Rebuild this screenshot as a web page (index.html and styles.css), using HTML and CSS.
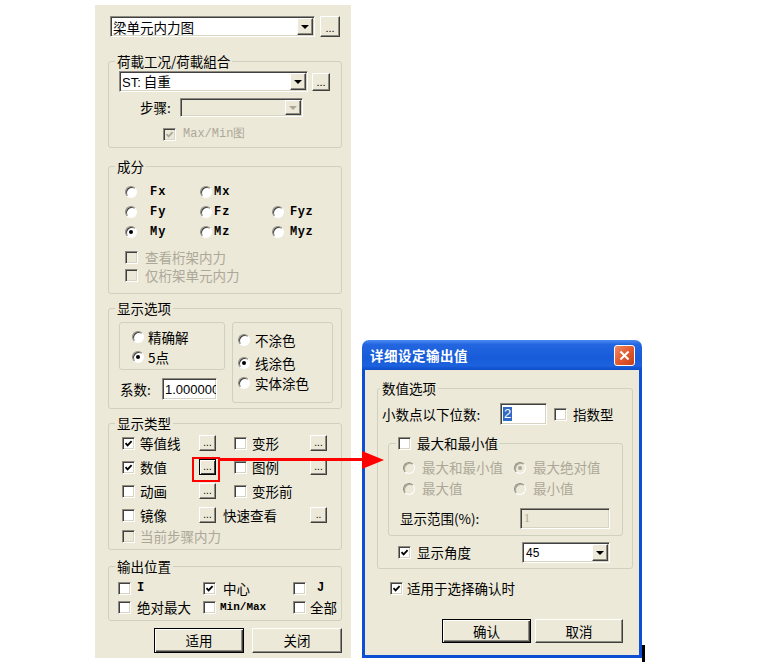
FILE: index.html
```html
<!DOCTYPE html>
<html>
<head>
<meta charset="utf-8">
<title>梁单元内力图</title>
<link rel="stylesheet" href="styles.css">
</head>
<body>
<div class="page">
  <div class="panel">
    <div class="toprow">
      <div class="combo c-main"><span class="ctext">梁单元内力图</span><span class="dd"><i></i></span></div>
      <span class="btn dots b-main">...</span>
    </div>

    <fieldset class="grp g1">
      <legend>荷載工况/荷載組合</legend>
      <div class="line l-st">
        <div class="combo c-st"><span class="ctext"><span class="lat">ST:</span> 自重</span><span class="dd"><i></i></span></div>
        <span class="btn dots b-st">...</span>
      </div>
      <div class="line l-step">
        <span class="step">步骤:</span>
        <div class="combo c-step dis"><span class="ctext"></span><span class="dd"><i></i></span></div>
      </div>
      <div class="line l-mm">
        <span class="cb dis"><svg viewBox="0 0 11 11"><path d="M2.5 5.2 L4.6 7.4 L8.6 3.2"/></svg></span>
        <span class="mono dtext mm-l">Max/Min图</span>
      </div>
    </fieldset>

    <fieldset class="grp g2">
      <legend>成分</legend>
      <div class="rgrid">
        <span class="opt"><span class="rb"></span><span class="mono lb1">Fx</span></span>
        <span class="opt"><span class="rb"></span><span class="mono lb2">Mx</span></span>
        <span class="opt"></span>
        <span class="opt"><span class="rb"></span><span class="mono lb1">Fy</span></span>
        <span class="opt"><span class="rb"></span><span class="mono lb2">Fz</span></span>
        <span class="opt"><span class="rb"></span><span class="mono lb3">Fyz</span></span>
        <span class="opt"><span class="rb on"></span><span class="mono lb1">My</span></span>
        <span class="opt"><span class="rb"></span><span class="mono lb2">Mz</span></span>
        <span class="opt"><span class="rb"></span><span class="mono lb3">Myz</span></span>
      </div>
      <div class="dchk first"><span class="cb dis"></span><span class="dtext">查看桁架内力</span></div>
      <div class="dchk"><span class="cb dis"></span><span class="dtext">仅桁架单元内力</span></div>
    </fieldset>

    <fieldset class="grp g3">
      <legend>显示选项</legend>
      <div class="g3-body">
        <div class="lcol">
          <div class="ibox ib1">
            <div class="ropt"><span class="rb"></span><span class="rl">精确解</span></div>
            <div class="ropt"><span class="rb on"></span><span class="rl">5点</span></div>
          </div>
          <div class="coef">
            <span class="coef-l">系数:</span>
            <span class="field f-coef">1.000000</span>
          </div>
        </div>
        <div class="ibox ib2">
          <div class="ropt"><span class="rb"></span><span class="rl">不涂色</span></div>
          <div class="ropt r2"><span class="rb on"></span><span class="rl">线涂色</span></div>
          <div class="ropt"><span class="rb"></span><span class="rl">实体涂色</span></div>
        </div>
      </div>
    </fieldset>

    <fieldset class="grp g4">
      <legend>显示类型</legend>
      <div class="trow">
        <span class="ti"><span class="cb"><svg viewBox="0 0 11 11"><path d="M2.5 5.2 L4.6 7.4 L8.6 3.2"/></svg></span><span>等值线</span></span>
        <span class="btn dots sm">...</span>
        <span class="ti t2"><span class="cb"></span><span>变形</span></span>
        <span class="btn dots sm">...</span>
      </div>
      <div class="trow">
        <span class="ti"><span class="cb"><svg viewBox="0 0 11 11"><path d="M2.5 5.2 L4.6 7.4 L8.6 3.2"/></svg></span><span>数值</span></span>
        <span class="btn dots sm pressed">...</span>
        <span class="ti t2"><span class="cb"></span><span>图例</span></span>
        <span class="btn dots sm">...</span>
      </div>
      <div class="trow">
        <span class="ti"><span class="cb"></span><span>动画</span></span>
        <span class="btn dots sm">...</span>
        <span class="ti t2"><span class="cb"></span><span>变形前</span></span>
      </div>
      <div class="trow">
        <span class="ti"><span class="cb"></span><span>镜像</span></span>
        <span class="btn dots sm">...</span>
        <span class="ti t3">快速查看</span>
        <span class="btn dots sm">..</span>
      </div>
      <div class="trow last">
        <span class="ti wide"><span class="cb dis"></span><span class="dtext">当前步骤内力</span></span>
      </div>
    </fieldset>

    <fieldset class="grp g5">
      <legend>输出位置</legend>
      <div class="orow">
        <span class="oi o1"><span class="cb"></span><span class="mono ol-i">I</span></span>
        <span class="oi o2"><span class="cb"><svg viewBox="0 0 11 11"><path d="M2.5 5.2 L4.6 7.4 L8.6 3.2"/></svg></span><span class="ol-c">中心</span></span>
        <span class="oi o3"><span class="cb"></span><span class="mono ol-j">J</span></span>
      </div>
      <div class="orow">
        <span class="oi o1"><span class="cb"></span><span class="ol-a">绝对最大</span></span>
        <span class="oi o2"><span class="cb"></span><span class="mono ol-m">Min/Max</span></span>
        <span class="oi o3"><span class="cb"></span><span class="ol-q">全部</span></span>
      </div>
    </fieldset>

    <div class="btnrow">
      <span class="btn pbtn def">适用</span>
      <span class="btn pbtn">关闭</span>
    </div>
  </div>

  <div class="dlg">
    <div class="title">
      <span class="ttext">详细设定输出值</span>
      <span class="close"><svg viewBox="0 0 21 21"><path d="M6 6 L15 15 M15 6 L6 15"/></svg></span>
    </div>
    <div class="dbody">
      <fieldset class="grp dg1">
        <legend>数值选项</legend>
        <div class="r-dec">
          <span class="dec-l">小数点以下位数:</span>
          <span class="field f-dec"><span class="sel">2</span></span>
          <span class="cb"></span>
          <span class="exp-l">指数型</span>
        </div>
        <fieldset class="grp dg2">
          <legend><span class="cb"></span><span>最大和最小值</span></legend>
          <div class="mgrid">
            <span class="opt"><span class="rb dis"></span><span class="dtext">最大和最小值</span></span>
            <span class="opt"><span class="rb dis on"></span><span class="dtext">最大绝对值</span></span>
            <span class="opt"><span class="rb dis"></span><span class="dtext">最大值</span></span>
            <span class="opt"><span class="rb dis"></span><span class="dtext">最小值</span></span>
          </div>
          <div class="r-range">
            <span class="range-l">显示范围(%):</span>
            <span class="field dis f-range">1</span>
          </div>
        </fieldset>
        <div class="r-ang">
          <span class="cb"><svg viewBox="0 0 11 11"><path d="M2.5 5.2 L4.6 7.4 L8.6 3.2"/></svg></span>
          <span class="ang-l">显示角度</span>
          <div class="combo c-ang"><span class="ctext lat">45</span><span class="dd"><i></i></span></div>
        </div>
      </fieldset>
      <div class="r-apply">
        <span class="cb"><svg viewBox="0 0 11 11"><path d="M2.5 5.2 L4.6 7.4 L8.6 3.2"/></svg></span>
        <span class="apply-l">适用于选择确认时</span>
      </div>
      <div class="dbtns">
        <span class="btn dbtn def">确认</span>
        <span class="btn dbtn b2">取消</span>
      </div>
    </div>
  </div>

  <svg class="overlay" width="760" height="668" viewBox="0 0 760 668">
    <rect x="193" y="458" width="26" height="23" fill="none" stroke="#FF0000" stroke-width="2"/>
    <line x1="219" y1="459.5" x2="366" y2="459.5" stroke="#FF0000" stroke-width="3"/>
    <polygon points="362,451 384,460 362,469" fill="#FF0000"/>
  </svg>
  <span class="mark"></span>
</div>
</body>
</html>
```

FILE: styles.css
```css
* { box-sizing: border-box; }
html, body { margin: 0; padding: 0; background: #fff; }
body {
  font-family: "Noto Sans CJK SC", "Liberation Sans", sans-serif;
  font-size: 13.5px;
  line-height: 15px;
  color: #000;
}
.page {
  position: relative;
  width: 760px;
  height: 668px;
  padding: 5px 0 0 95px;
  overflow: hidden;
}
.panel {
  width: 256px;
  height: 653px;
  background: #ECE9D8;
  padding: 11px 0 0 13px;
  display: flex;
  flex-direction: column;
  align-items: flex-start;
}

/* ---------- generic controls ---------- */
.lat { font-family: "Liberation Sans", sans-serif; font-size: 13px; }
.mono {
  font-family: "Liberation Mono", monospace;
  font-weight: bold;
  font-size: 12px;
}
.dtext { color: #ACA899; }

.btn {
  display: flex;
  align-items: center;
  justify-content: center;
  background: #ECE9D8;
  border: 1px solid;
  border-color: #fff #404040 #404040 #fff;
  box-shadow: inset -1px -1px #8E8C80;
  white-space: nowrap;
}
.btn.dots {
  align-items: flex-end;
  font-family: "Liberation Sans", sans-serif;
  font-size: 11px;
  line-height: 11px;
  padding-bottom: 2px;
}
.btn.def {
  border: 1px solid #000;
  box-shadow: inset 1px 1px #fff, inset -1px -1px #404040, inset -2px -2px #8E8C80;
}

.field {
  display: flex;
  align-items: center;
  background: #fff;
  border: 1px solid;
  border-color: #8E8C80 #fff #fff #8E8C80;
  box-shadow: inset 1px 1px #404040, inset -1px -1px #D8D4C4;
  padding: 0 3px;
  white-space: nowrap;
  overflow: hidden;
}
.field.dis { background: #ECE9D8; color: #ACA899; }

.combo {
  display: flex;
  align-items: stretch;
  background: #fff;
  border: 1px solid;
  border-color: #8E8C80 #fff #fff #8E8C80;
  box-shadow: inset 1px 1px #404040, inset -1px -1px #D8D4C4;
  padding: 1px;
}
.combo.dis { background: #ECE9D8; }
.combo .ctext {
  flex: 1;
  align-self: center;
  padding-left: 1px;
  line-height: 18px;
  white-space: nowrap;
  overflow: hidden;
}
.combo .dd {
  width: 16px;
  display: flex;
  align-items: center;
  justify-content: center;
  background: #ECE9D8;
  border: 1px solid;
  border-color: #fff #404040 #404040 #fff;
  box-shadow: inset -1px -1px #8E8C80;
}
.combo .dd i {
  width: 0;
  height: 0;
  border-left: 4px solid transparent;
  border-right: 4px solid transparent;
  border-top: 4px solid #000;
  margin-top: 1px;
}
.combo.dis .dd i { border-top-color: #ACA899; }

.cb {
  flex: none;
  width: 13px;
  height: 13px;
  background: #fff;
  border: 1px solid;
  border-color: #8E8C80 #fff #fff #8E8C80;
  box-shadow: inset 1px 1px #404040, inset -1px -1px #D8D4C4;
  display: flex;
  align-items: center;
  justify-content: center;
}
.cb svg { width: 11px; height: 11px; }
.cb svg path { fill: none; stroke: #000; stroke-width: 1.8; }
.cb.dis { background: #ECE9D8; }
.cb.dis svg path { stroke: #ACA899; }

.rb {
  flex: none;
  position: relative;
  width: 12px;
  height: 12px;
  border-radius: 50%;
  background: #fff;
  border: 1px solid;
  border-color: #8E8C80 #fff #fff #8E8C80;
  box-shadow: inset 1px 1px #404040;
}
.rb.on::after {
  content: "";
  position: absolute;
  left: 3px;
  top: 3px;
  width: 4px;
  height: 4px;
  border-radius: 50%;
  background: #000;
}
.rb.dis { background: #ECE9D8; box-shadow: inset 1px 1px #ACA899; }
.rb.dis.on::after { background: #ACA899; }

/* ---------- group boxes ---------- */
.grp {
  margin: 0;
  min-width: 0;
  border: 1px solid #D0D0BF;
  border-radius: 3px;
  padding: 0 0 0 10px;
  width: 234px;
}
.grp > legend {
  padding: 0 2px;
  margin-left: -4px;
  line-height: 14px;
  height: 14px;
  white-space: nowrap;
}

/* ---------- top combo ---------- */
.toprow { display: flex; gap: 5px; margin-left: 2px; }
.c-main { width: 205px; height: 21px; }
.b-main { width: 20px; height: 21px; }

/* ---------- group 1 ---------- */
.g1 { height: 94px; margin-top: 17px; }
.line { display: flex; align-items: center; }
.l-st { margin-top: 3px; }
.c-st { width: 189px; height: 21px; }
.b-st { width: 18px; height: 18px; margin-left: 4px; }
.l-step { margin-top: 6px; }
.step { width: 40px; margin-left: 21px; }
.c-step { width: 123px; height: 19px; }
.l-mm { margin-top: 11px; margin-left: 44px; height: 13px; }
.mm-l { margin-left: 7px; font-weight: normal; }

/* ---------- group 2 ---------- */
.g2 { height: 135px; margin-top: 11px; }
.rgrid {
  display: grid;
  grid-template-columns: 75px 72px 60px;
  grid-auto-rows: 20px;
  margin-top: 9px;
  padding-left: 6px;
}
.opt { display: flex; align-items: center; white-space: nowrap; }
.lb1 { margin-left: 13px; letter-spacing: 1px; }
.lb2 { margin-left: 2px; letter-spacing: 1px; }
.lb3 { margin-left: 6px; letter-spacing: 0.5px; }
.dchk {
  display: flex;
  align-items: center;
  height: 18px;
  line-height: 14px;
  padding-left: 6px;
  gap: 7px;
  white-space: nowrap;
}
.dchk.first { margin-top: 6px; }

/* ---------- group 3 ---------- */
.g3 { height: 108px; margin-top: 7px; }
.g3-body { display: flex; align-items: flex-start; gap: 7px; margin-top: 7px; }
.lcol { width: 106px; }
.ibox { border: 1px solid #D0D0BF; border-radius: 3px; }
.ib1 { height: 48px; padding: 4px 0 0 12px; }
.ropt { display: flex; align-items: center; height: 20px; white-space: nowrap; }
.rl { margin-left: 4px; }
.coef { display: flex; align-items: center; margin-top: 8px; height: 22px; }
.coef-l { width: 42px; margin-left: 1px; }
.f-coef {
  width: 55px;
  height: 22px;
  font-family: "Liberation Sans", sans-serif;
  font-size: 13px;
  padding: 0 2px;
}
.ib2 { width: 101px; height: 81px; padding: 7px 0 0 5px; }
.ib2 .rl { margin-left: 5px; }
.ib2 .r2 { margin-top: 3px; }

/* ---------- group 4 ---------- */
.g4 { height: 134px; margin-top: 7px; }
.trow { display: flex; align-items: center; height: 24px; padding-left: 3px; white-space: nowrap; }
.g4 .trow:first-of-type { margin-top: 1px; }
.trow.last { height: 18px; }
.ti { display: flex; align-items: center; gap: 5px; width: 77px; white-space: nowrap; }
.ti.wide { width: auto; }
.ti.t2 { width: 76px; margin-left: 18px; }
.ti.t3 { width: 87px; margin-left: 7px; }
.btn.sm { width: 17px; height: 16px; font-size: 10px; line-height: 10px; }
.btn.sm.pressed {
  border-color: #000;
  box-shadow: inset 1px 1px #fff, inset -1px -1px #404040;
}

/* ---------- group 5 ---------- */
.g5 { height: 62px; margin-top: 9px; }
.orow { display: flex; align-items: center; height: 19px; margin-left: -1px; white-space: nowrap; }
.g5 .orow:first-of-type { margin-top: 6px; }
.oi { display: flex; align-items: center; }
.o1 { width: 85px; }
.o2 { width: 90px; }
.ol-i { margin-left: 6px; }
.ol-a { margin-left: 6px; }
.ol-c { margin-left: 7px; }
.ol-m { margin-left: 4px; font-size: 11px; }
.ol-j { margin-left: 11px; }
.ol-q { margin-left: 4px; }

/* ---------- bottom buttons ---------- */
.btnrow { display: flex; gap: 8px; margin-top: 7px; margin-left: 46px; }
.pbtn { width: 90px; height: 25px; }

/* ---------- dialog ---------- */
.dlg {
  position: absolute;
  left: 362px;
  top: 340px;
  width: 280px;
  height: 318px;
  display: flex;
  flex-direction: column;
}
.title {
  height: 30px;
  border-radius: 7px 7px 0 0;
  background: linear-gradient(#4A8AF2 0%, #2466E0 15%, #175BD9 60%, #1C62DE 85%, #0E4CC8 100%);
  display: flex;
  align-items: center;
  justify-content: space-between;
  padding: 0 7px 0 8px;
  color: #fff;
  font-weight: bold;
}
.ttext { font-size: 13.5px; letter-spacing: 0.5px; }
.close {
  width: 21px;
  height: 21px;
  border: 1px solid #fff;
  border-radius: 3px;
  background: linear-gradient(135deg, #F08A66 0%, #E35A2F 50%, #C8401C 100%);
  display: flex;
}
.close svg { width: 19px; height: 19px; }
.close svg path { stroke: #fff; stroke-width: 2.2; fill: none; }
.dbody {
  flex: 1;
  background: #ECE9D8;
  border: 3px solid #0D4FD4;
  border-top: 0;
  padding: 11px 0 0 12px;
  display: flex;
  flex-direction: column;
  align-items: flex-start;
}
.dg1 { width: 256px; height: 188px; padding-left: 4px; }
.dg1 > legend { margin-left: -2px; }
.r-dec { display: flex; align-items: center; height: 22px; margin-top: 8px; white-space: nowrap; }
.dec-l { width: 118px; }
.f-dec { width: 47px; height: 22px; padding: 0 2px; font-family: "Liberation Sans", sans-serif; font-size: 13px; }
.sel { background: #316AC5; color: #fff; padding: 0 1px; line-height: 14px; }
.r-dec .cb { margin-left: 7px; }
.exp-l { margin-left: 6px; }
.dg2 { width: 235px; height: 100px; margin-top: 11px; margin-left: 6px; padding-left: 10px; }
.dg2 > legend {
  display: flex;
  align-items: center;
  gap: 6px;
  margin-left: -3px;
}
.mgrid {
  display: grid;
  grid-template-columns: 111px auto;
  grid-auto-rows: 21px;
  margin-top: 7px;
  padding-left: 4px;
}
.mgrid .opt { gap: 7px; }
.r-range { display: flex; align-items: center; height: 21px; margin-top: 9px; white-space: nowrap; }
.range-l { width: 120px; margin-left: 1px; }
.f-range { width: 90px; height: 21px; font-family: "Liberation Serif", serif; font-size: 12px; }
.r-ang { display: flex; align-items: center; height: 21px; margin-top: 6px; padding-left: 16px; white-space: nowrap; }
.ang-l { width: 105px; margin-left: 6px; }
.c-ang { width: 88px; height: 21px; }
.c-ang .ctext { font-size: 12px; padding-left: 2px; }
.r-apply { display: flex; align-items: center; gap: 4px; height: 16px; margin-top: 11px; margin-left: 13px; white-space: nowrap; }
.dbtns { display: flex; gap: 4px; margin-top: 23px; margin-left: 65px; }
.dbtn { width: 89px; height: 24px; }
.dbtn.b2 { width: 88px; }

/* ---------- overlay annotations ---------- */
.overlay { position: absolute; left: 0; top: 0; pointer-events: none; }
.mark { position: absolute; left: 642px; top: 645px; width: 3px; height: 17px; background: #000; }
```
